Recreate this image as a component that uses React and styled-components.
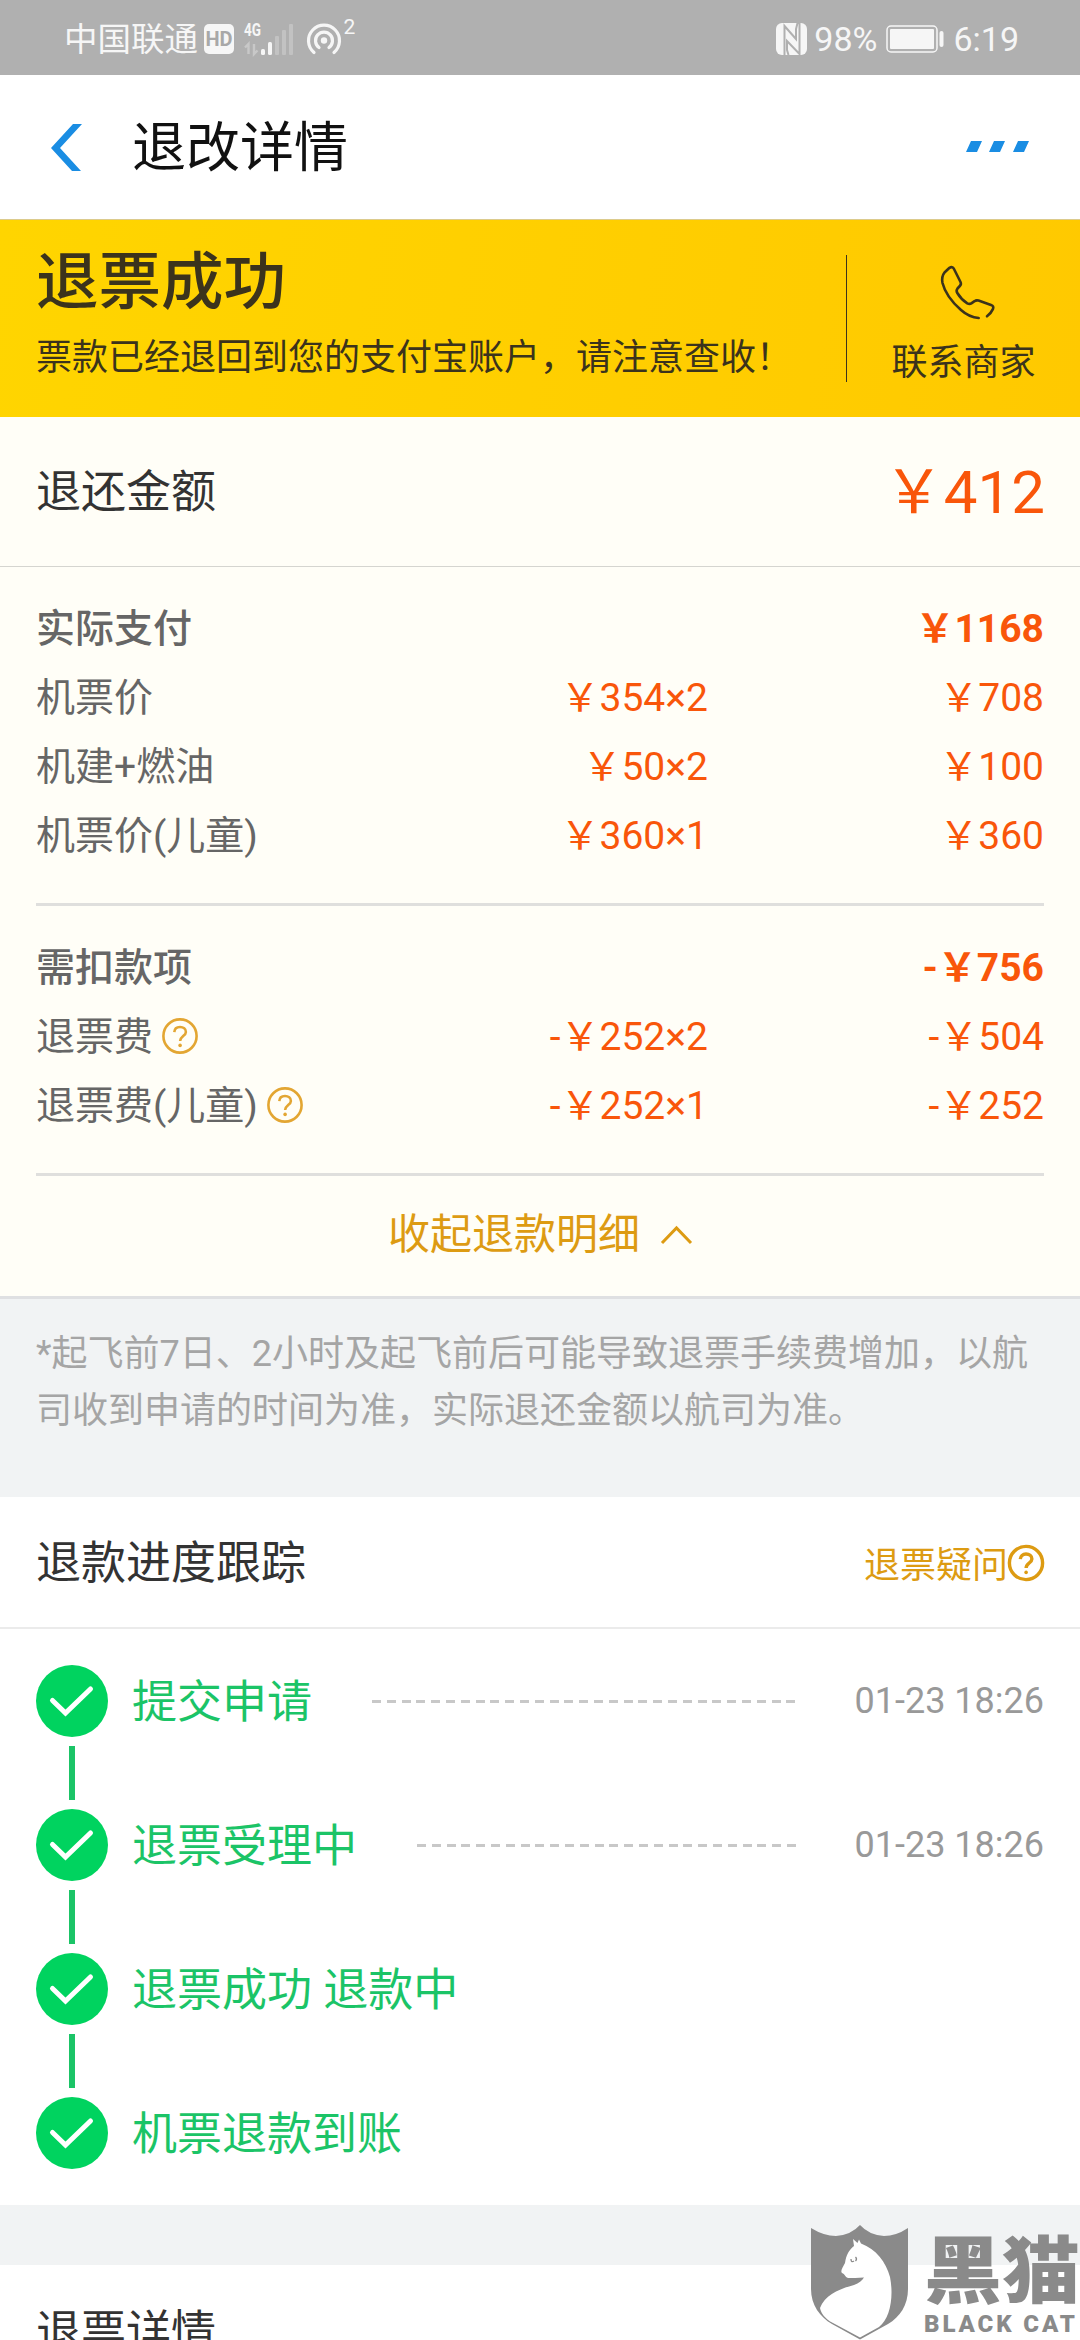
import React from "react";
import styled, { createGlobalStyle } from "styled-components";

const GlobalStyle = createGlobalStyle`
  * {
    box-sizing: border-box;
  }
  body {
    margin: 0;
    background: #f1f3f4;
    font-family: Roboto, "Noto Sans CJK SC", sans-serif;
  }
  svg {
    flex-shrink: 0;
    overflow: visible;
  }
`;

const Page = styled.div`
  position: relative;
  width: 1080px;
  height: 2340px;
  overflow: hidden;
  background: #f1f3f4;
`;

const StatusBar = styled.div`
  height: 75px;
  padding: 2px 61px 0 64px;
  display: flex;
  align-items: center;
  justify-content: space-between;
  background: #b0b0b0;
  color: #f6f6f6;
`;
const StatusIcons = styled.div`
  display: flex;
  align-items: center;
  gap: 9px;
`;
const Carrier = styled.span`
  padding-top: 2px;
  font-size: 33.5px;
  line-height: 40px;
`;
const HdBadge = styled.span`
  width: 30px;
  height: 30px;
  margin: 0 1px 0 -3px;
  border-radius: 5px;
  background: #f6f6f6;
  color: #a8a8a8;
  font-size: 20px;
  font-weight: 700;
  line-height: 31px;
  text-align: center;
`;
const StatusText = styled.span`
  font-size: 34px;
  line-height: 40px;
`;

const Header = styled.header`
  height: 145px;
  padding: 0 51px;
  display: flex;
  align-items: center;
  background: #fff;
  border-bottom: 1px solid #dccb8c;
`;
const Title = styled.h1`
  flex: 1;
  margin: 0 0 0 50px;
  padding-top: 4px;
  font-size: 54px;
  font-weight: 400;
  line-height: 72px;
  color: #111;
`;

const Banner = styled.section`
  height: 197px;
  padding: 0 36px;
  display: flex;
  background: linear-gradient(100deg, #ffd500, #ffc900);
  color: #3b331c;
`;
const BannerText = styled.div`
  flex: 1;
  padding-top: 21px;
`;
const BannerTitle = styled.h2`
  margin: 0;
  font-size: 62.5px;
  font-weight: 500;
  line-height: 84px;
`;
const BannerDesc = styled.p`
  margin: 6px 0 0;
  font-size: 36px;
  line-height: 54px;
`;
const Contact = styled.div`
  width: 198px;
  height: 127px;
  margin-top: 35px;
  padding: 11px 7px 0 43px;
  display: flex;
  flex-direction: column;
  align-items: center;
  border-left: 1px solid #3b331c;
`;
const ContactLabel = styled.div`
  margin-top: 16px;
  font-size: 36px;
  line-height: 54px;
  white-space: nowrap;
`;

const Summary = styled.section`
  height: 150px;
  padding: 3px 35px 0 36px;
  display: flex;
  align-items: center;
  justify-content: space-between;
  background: #fffef7;
  border-bottom: 1px solid #d5d5d0;
`;
const SummaryLabel = styled.span`
  font-size: 45px;
  line-height: 66px;
  color: #333;
`;
const SummaryAmount = styled.span`
  font-size: 60px;
  line-height: 78px;
  color: #f9560a;
`;

const Details = styled.section`
  height: 732px;
  padding: 0 36px;
  background: #fffef7;
  border-bottom: 3px solid #dfe0e2;
`;
const DetailGroup = styled.div`
  padding: 27px 0 33px;
  border-bottom: 3px solid #dfdfdd;
`;
const DetailRow = styled.div`
  height: 69px;
  display: grid;
  grid-template-columns: 372px 300px 1fr;
  align-items: center;
  font-size: 39px;
  line-height: 58px;
  font-weight: ${(props) => (props.$bold ? 700 : 400)};
`;
const DetailName = styled.div`
  display: flex;
  align-items: center;
  gap: 9px;
  font-weight: ${(props) => (props.$bold ? 500 : 400)};
  color: #666;
  white-space: nowrap;
`;
const DetailValue = styled.div`
  text-align: right;
  color: #f9560a;
`;
const Toggle = styled.div`
  height: 118px;
  display: flex;
  align-items: center;
  justify-content: center;
  gap: 21px;
  font-size: 42px;
  line-height: 60px;
  color: #dd9b12;
`;

const Note = styled.p`
  height: 198px;
  margin: 0;
  padding: 27px 36px 0;
  font-size: 36px;
  line-height: 57px;
  color: #a5a5a5;
`;

const Panel = styled.section`
  background: #fff;
`;
const PanelHeader = styled.div`
  height: 132px;
  padding: 4px 36px 0;
  display: flex;
  align-items: center;
  justify-content: space-between;
  border-bottom: ${(props) => (props.$line ? "2px solid #ebebeb" : "none")};
`;
const PanelTitle = styled.h3`
  margin: 0;
  font-size: 45px;
  font-weight: 400;
  line-height: 66px;
  color: #333;
`;
const HelpLink = styled.div`
  display: flex;
  align-items: center;
  font-size: 36px;
  line-height: 54px;
  color: #dd9b12;
`;
const HelpText = styled.span`
  padding-top: 4px;
`;
const Steps = styled.div`
  height: 576px;
  padding: 36px 36px 0;
`;
const Step = styled.div`
  height: 72px;
  display: flex;
  align-items: center;
`;
const StepBar = styled.div`
  width: 6px;
  height: 54px;
  margin: 9px 0 9px 33px;
  background: #1bc467;
`;
const StepName = styled.span`
  margin-left: 24px;
  padding-top: 3px;
  font-size: 45px;
  line-height: 66px;
  color: #1bc467;
`;
const Dashes = styled.div`
  flex: 1;
  height: 3px;
  margin: 1px 59px 0 60px;
  background: repeating-linear-gradient(
    to right,
    #c8c8c8 0 9px,
    transparent 9px 14.8px
  );
`;
const StepTime = styled.span`
  font-size: 36px;
  line-height: 54px;
  color: #999;
`;
const Gap = styled.div`
  height: 60px;
`;

const Watermark = styled.div`
  position: absolute;
  right: 0;
  bottom: 0;
  display: flex;
  gap: 15px;
  color: #8a8a8a;
`;
const Brand = styled.div`
  width: 156px;
  white-space: nowrap;
`;
const BrandName = styled.div`
  font-family: "Noto Sans CJK SC", sans-serif;
  font-size: 78px;
  font-weight: 900;
  line-height: 80px;
  transform: scaleY(0.93);
`;
const BrandLatin = styled.div`
  margin-top: 5px;
  font-size: 24px;
  font-weight: 900;
  line-height: 28px;
  letter-spacing: 2.9px;
`;

const charges = [
  { name: "实际支付", total: "￥1168", bold: true },
  { name: "机票价", unit: "￥354×2", total: "￥708" },
  { name: "机建+燃油", unit: "￥50×2", total: "￥100" },
  { name: "机票价(儿童)", unit: "￥360×1", total: "￥360" },
];

const deductions = [
  { name: "需扣款项", total: "-￥756", bold: true },
  { name: "退票费", unit: "-￥252×2", total: "-￥504", help: true },
  { name: "退票费(儿童)", unit: "-￥252×1", total: "-￥252", help: true },
];

const steps = [
  { name: "提交申请", time: "01-23 18:26" },
  { name: "退票受理中", time: "01-23 18:26" },
  { name: "退票成功 退款中" },
  { name: "机票退款到账" },
];

const HelpIcon = ({ color = "#e3a632", stroke = 2.6 }) => (
  <svg width="36" height="36" viewBox="0 0 36 36" fill="none" stroke={color} strokeWidth={stroke}>
    <circle cx="18" cy="17" r="16.6" />
    <path d="M12.3 13.2C12.5 10 14.8 8 18 8c3.3 0 5.9 1.9 5.9 4.9 0 3.9-5.8 4.5-5.8 9.1" />
    <circle cx="18.1" cy="26.4" r="1.8" fill={color} stroke="none" />
  </svg>
);

const CheckIcon = () => (
  <svg width="72" height="72" viewBox="0 0 72 72">
    <circle cx="36" cy="36" r="36" fill="#00d35f" />
    <path d="M16.5 35.5L29.5 48 54.5 24" fill="none" stroke="#fff" strokeWidth="5" strokeLinecap="round" />
  </svg>
);

const PhoneIcon = () => (
  <svg width="54" height="54" viewBox="-4 0 54 54" fill="none" stroke="currentColor" strokeWidth="2.6" strokeLinecap="round" strokeLinejoin="round">
    <path d="M37.7 52C31 51.5 25 48.5 20 44 12 37 4 27 1.5 17 .5 12 1.5 9 3.5 6.5L8.5 1.8c2-1.2 3.5-.8 4.5 1.2L19.5 16c.8 1.6.5 2.8-.7 4l-2.3 2.5c-1.2 1.500-1.2 2.800-.2 4.500 2.400 4 6 7.800 10 10.300 1.600.9 3 .8 4.400-.2l2.800-1.900c1.400-1 2.600-1 4-.6l12.500 4.300c2.200.9 2.800 2.200 1.900 4.200-1.200 2.600-3 5-5.900 7.200" />
  </svg>
);

const SignalIcon = () => (
  <svg width="52" height="34" viewBox="0 0 52 34" fill="#f6f6f6">
    <text x="0" y="14" fontSize="19" fontWeight="700" textLength="17" lengthAdjust="spacingAndGlyphs">4G</text>
    <path d="M4.5 32V22L1 25.5M10 22v10l3.500-3.500" stroke="#c8c8c8" strokeWidth="2.4" fill="none" />
    <rect x="17" y="27" width="4" height="6" rx="1.5" />
    <rect x="24" y="20" width="4" height="13" rx="1.5" />
    <rect x="31" y="14" width="4" height="19" rx="1" opacity=".25" />
    <rect x="38" y="8" width="4" height="25" rx="1" opacity=".25" />
    <rect x="45" y="2" width="4" height="31" rx="1" opacity=".25" />
  </svg>
);

const HotspotIcon = () => (
  <svg width="50" height="38" viewBox="0 0 50 38" fill="none" stroke="#f6f6f6" strokeWidth="3.2" strokeLinecap="round">
    <path d="M9 32.500A15.500 15.500 0 1 1 29 32.500" />
    <path d="M14 27.500A8.500 8.500 0 1 1 24 27.500" />
    <circle cx="19" cy="20.5" r="3.2" fill="#f6f6f6" stroke="none" />
    <text x="38.5" y="14" fontSize="21" fill="#f6f6f6" stroke="none">2</text>
  </svg>
);

const NfcIcon = () => (
  <svg width="28" height="32" viewBox="0 0 28 32">
    <rect x="-1" width="31" height="32" rx="6" fill="#f6f6f6" />
    <path d="M7.5 32V3L19 16V6l1.500-6h2v31L10 18v9l1.500 5" fill="none" stroke="#b0b0b0" strokeWidth="2" />
  </svg>
);

const BatteryIcon = () => (
  <svg width="58" height="28" viewBox="0 0 58 28" fill="#f6f6f6">
    <rect x="1" y="1" width="50" height="26" rx="4" fill="none" stroke="#f6f6f6" strokeWidth="1.5" />
    <rect x="4" y="4" width="44" height="20" rx="1" />
    <rect x="53.5" y="6" width="4" height="16" rx="2" />
  </svg>
);

const ShieldIcon = () => (
  <svg width="98" height="115" viewBox="0 0 98 115">
    <path d="M0 3Q13 11 25 11 40 10 49 0 58 10 73 11 85 11 97 3V64C97 80 89 92 77 99L49 114.5 21 99C9 92 0 80 0 64Z" fill="#8a8a8a" />
    <path d="M42 14L46.5 18 48 14.5 50 18.5C65 24 75 37 79 52 83 72 79 94 68 102L49 112.5 22 98C14 94 10 88 9 83 14 70 28 64 43 60 48 58 51 56 53 52.5 46 53 42 53 37 53 34 52 34 49 31 48 29 46 32 42 34 38 35 30 38 25 43 21Z" fill="#fff" />
    <path d="M40 34Q40 38 43 36M44.5 32Q46.5 34 44.5 36" fill="none" stroke="#8a8a8a" strokeWidth="1.3" />
  </svg>
);

const DetailList = ({ items }) => (
  <DetailGroup>
    {items.map((item) => (
      <DetailRow key={item.name} $bold={item.bold}>
        <DetailName $bold={item.bold}>
          {item.name}
          {item.help && <HelpIcon />}
        </DetailName>
        <DetailValue>{item.unit}</DetailValue>
        <DetailValue>{item.total}</DetailValue>
      </DetailRow>
    ))}
  </DetailGroup>
);

const App = () => {
  return (
    <Page>
      <GlobalStyle />
      <StatusBar>
        <StatusIcons>
          <Carrier>中国联通</Carrier>
          <HdBadge>HD</HdBadge>
          <SignalIcon />
          <HotspotIcon />
        </StatusIcons>
        <StatusIcons>
          <NfcIcon />
          <StatusText>98%</StatusText>
          <BatteryIcon />
          <StatusText>6:19</StatusText>
        </StatusIcons>
      </StatusBar>

      <Header>
        <svg width="31" height="47" viewBox="0 0 31 47">
          <path d="M22 0h9L9 24l21 23h-9L0 24Z" fill="#1a8de3" />
        </svg>
        <Title>退改详情</Title>
        <svg width="64" height="11" viewBox="-1 1 64 11" fill="#1a8de3">
          <path d="M5 0h11l-5 11H0ZM28 0h11l-5 11H23ZM52 0h11l-5 11H47Z" />
        </svg>
      </Header>

      <Banner>
        <BannerText>
          <BannerTitle>退票成功</BannerTitle>
          <BannerDesc>票款已经退回到您的支付宝账户，请注意查收！</BannerDesc>
        </BannerText>
        <Contact>
          <PhoneIcon />
          <ContactLabel>联系商家</ContactLabel>
        </Contact>
      </Banner>

      <Summary>
        <SummaryLabel>退还金额</SummaryLabel>
        <SummaryAmount>￥412</SummaryAmount>
      </Summary>

      <Details>
        <DetailList items={charges} />
        <DetailList items={deductions} />
        <Toggle>
          收起退款明细
          <svg width="31" height="19" viewBox="0 0 31 19" fill="none" stroke="currentColor" strokeWidth="3">
            <path d="M1 17L15.5 2 30 17" />
          </svg>
        </Toggle>
      </Details>

      <Note>
        *起飞前7日、2小时及起飞前后可能导致退票手续费增加，以航司收到申请的时间为准，实际退还金额以航司为准。
      </Note>

      <Panel>
        <PanelHeader $line>
          <PanelTitle>退款进度跟踪</PanelTitle>
          <HelpLink>
            <HelpText>退票疑问</HelpText>
            <HelpIcon color="#dd9b12" stroke={3.4} />
          </HelpLink>
        </PanelHeader>
        <Steps>
          {steps.map((step, index) => (
            <React.Fragment key={step.name}>
              {index > 0 && <StepBar />}
              <Step>
                <CheckIcon />
                <StepName>{step.name}</StepName>
                {step.time && <Dashes />}
                {step.time && <StepTime>{step.time}</StepTime>}
              </Step>
            </React.Fragment>
          ))}
        </Steps>
      </Panel>

      <Gap />

      <Panel>
        <PanelHeader>
          <PanelTitle>退票详情</PanelTitle>
        </PanelHeader>
      </Panel>

      <Watermark>
        <ShieldIcon />
        <Brand>
          <BrandName>黑猫</BrandName>
          <BrandLatin>BLACK CAT</BrandLatin>
        </Brand>
      </Watermark>
    </Page>
  );
};

export default App;
